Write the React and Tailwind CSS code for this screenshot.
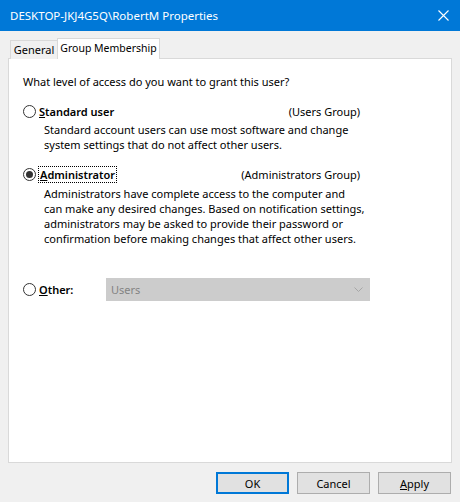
import React from "react";

const font = { fontFamily: '"Noto Sans", "Open Sans", sans-serif' };

function Radio({ checked }) {
  return (
    <span className="flex h-[13px] w-[13px] shrink-0 items-center justify-center rounded-full border border-[#333333] bg-white">
      {checked && <span className="h-[7px] w-[7px] rounded-full bg-[#333333]" />}
    </span>
  );
}

function Btn({ children, primary }) {
  return (
    <button
      className={
        primary
          ? "h-[22px] w-[73px] border-2 border-[#0078d7] bg-[#e1e1e1] text-[11px] leading-none text-black"
          : "h-[22px] w-[73px] border border-[#adadad] bg-[#e1e1e1] text-[11px] leading-none text-black"
      }
    >
      {children}
    </button>
  );
}

export default function App() {
  return (
    <div className="flex h-[502px] w-[460px] flex-col bg-[#f0f0f0] text-[11px] text-black" style={font}>
      {/* title bar */}
      <div className="flex h-[31px] items-center justify-between bg-[#0078d7] pl-[10px] pr-[11px] text-white">
        <span className="text-[11.5px]">DESKTOP-JKJ4G5Q\RobertM Properties</span>
        <svg width="11" height="11" viewBox="0 0 11 11">
          <path d="M0.5 0.5 L10.5 10.5 M10.5 0.5 L0.5 10.5" stroke="white" strokeWidth="1.1" />
        </svg>
      </div>

      <div className="flex flex-1 flex-col px-[8px] pt-[7px]">
        {/* tabs */}
        <div className="relative z-10 -mb-px ml-[2px] flex items-end">
          <div className="flex h-[19px] w-[47px] items-center justify-center whitespace-nowrap border-l border-t border-[#d9d9d9] bg-[#f0f0f0]">
            General
          </div>
          <div className="flex h-[21px] w-[103px] items-center justify-center whitespace-nowrap border-x border-t border-[#d9d9d9] bg-white text-[10.5px]">
            Group Membership
          </div>
        </div>

        {/* panel */}
        <div className="flex h-[405px] flex-col border border-[#d9d9d9] bg-white pl-[14px] leading-[15px]">
          <p className="mt-[15px]">What level of access do you want to grant this user?</p>

          <div className="mt-[14px] flex h-[16px] w-[337px] items-center">
            <Radio />
            <span className="ml-[3px] flex-1 font-semibold">
              <u>S</u>tandard user
            </span>
            <span>(Users Group)</span>
          </div>
          <p className="ml-[21px] mt-[3px]">
            Standard account users can use most software and change
            <br />
            system settings that do not affect other users.
          </p>

          <div className="mt-[14px] flex h-[17px] w-[337px] items-center">
            <Radio checked />
            <span className="ml-[2px] flex-1">
              <span className="border border-dotted border-black px-px font-semibold">
                <u>A</u>dministrator
              </span>
            </span>
            <span>(Administrators Group)</span>
          </div>
          <p className="ml-[21px] mt-[3px]">
            Administrators have complete access to the computer and
            <br />
            can make any desired changes. Based on notification settings,
            <br />
            administrators may be asked to provide their password or
            <br />
            confirmation before making changes that affect other users.
          </p>

          <div className="mt-[32px] flex h-[23px] items-center">
            <Radio />
            <span className="ml-[3px] w-[67px] font-semibold">
              <u>O</u>ther:
            </span>
            <div className="flex h-[23px] w-[264px] items-center justify-between border border-[#cccccc] bg-[#cccccc] pl-[4px] pr-[6px] text-[#838383]">
              <span>Users</span>
              <svg width="9" height="6" viewBox="0 0 9 6">
                <path d="M0.5 0.5 L4.5 4.5 L8.5 0.5" fill="none" stroke="#a6a6a6" strokeWidth="1" />
              </svg>
            </div>
          </div>
        </div>

        {/* dialog buttons */}
        <div className="mt-[9px] flex justify-end gap-[8px] pr-px">
          <Btn primary>OK</Btn>
          <Btn>Cancel</Btn>
          <Btn>
            <u>A</u>pply
          </Btn>
        </div>
      </div>
    </div>
  );
}
